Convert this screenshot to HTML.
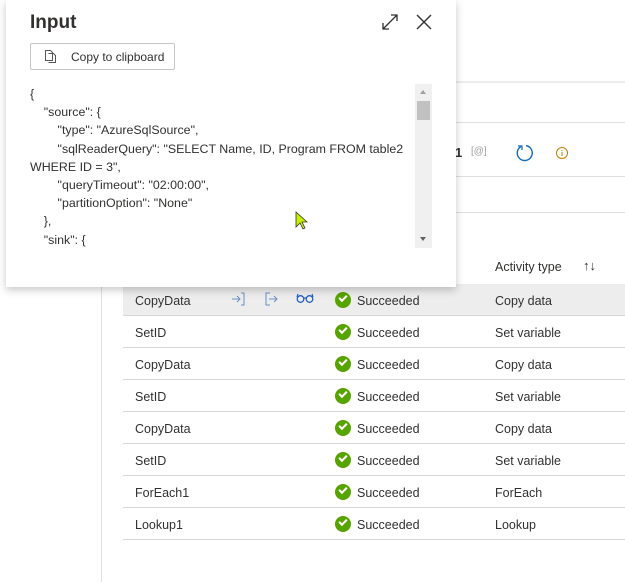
<!DOCTYPE html>
<html><head><style>
body{margin:0;width:625px;height:582px;position:relative;overflow:hidden;background:#fff;font-family:"Liberation Sans",sans-serif;color:#323130;font-size:12.5px}
.abs{position:absolute}
.hl{position:absolute;height:1px;background:#e1dfdd}
.row{position:absolute;left:123px;width:502px;height:32px;border-bottom:1px solid #d6d6d6;box-sizing:border-box}
.row span{position:absolute;top:10px}
.chk{position:absolute;left:212px;top:8px;width:16px;height:16px;border-radius:50%;background:#57a300}
.chk:after{content:"";position:absolute;left:4px;top:3px;width:6px;height:3px;border-left:2px solid #fff;border-bottom:2px solid #fff;transform:rotate(-45deg)}
.pop{position:absolute;left:6px;top:0;width:450px;height:287px;background:#fff;box-shadow:0 3px 8px rgba(0,0,0,.22)}
.code{position:absolute;left:24px;top:85px;line-height:18.2px;font-size:12.4px;white-space:pre;color:#323130}
</style></head><body>
<div class="hl" style="left:440px;top:81px;width:185px;height:2px;background:#ededed"></div>
<div class="hl" style="left:440px;top:122px;width:185px"></div>
<div class="hl" style="left:440px;top:176px;width:185px"></div>
<div class="hl" style="left:440px;top:212px;width:185px"></div>
<div class="abs" style="left:455px;top:145px;font-weight:bold;font-size:13px">1</div>
<div class="abs" style="left:471px;top:146px;font-size:10px;color:#a0a0a0">[@]</div>
<svg class="abs" style="left:515px;top:143px" width="20" height="20" viewBox="0 0 20 20"><path d="M6 3.5A7.5 7.5 0 1 0 11 2.6" fill="none" stroke="#0f6cbd" stroke-width="1.4"/><path d="M3 3h4v4" fill="none" stroke="#0f6cbd" stroke-width="1.2"/></svg>
<svg class="abs" style="left:555px;top:146px" width="14" height="14"><circle cx="7" cy="7" r="5.5" fill="none" stroke="#c07d00" stroke-width="1"/><path d="M7 6v4M7 4v1" stroke="#c07d00"/></svg>
<div class="abs" style="left:101px;top:287px;width:1px;height:295px;background:#e1dfdd"></div>
<div class="abs" style="left:495px;top:260px;font-size:12.5px">Activity type</div>
<div class="abs" style="left:583px;top:258px;font-size:13px">↑↓</div>
<div class="row" style="top:284px;background:#ededed"><span style="left:12px">CopyData</span>
<svg class="abs" style="left:108px;top:8px" width="15" height="14"><path d="M1 7h8M6 4l3 3-3 3M10 1h3v12h-3" fill="none" stroke="#6a8fc4" stroke-width="1"/></svg>
<svg class="abs" style="left:141px;top:8px" width="15" height="14"><path d="M6 1H2v12h4M5 7h8M10 4l3 3-3 3" fill="none" stroke="#6a8fc4" stroke-width="1"/></svg>
<svg class="abs" style="left:173px;top:9px" width="18" height="10"><circle cx="4.5" cy="6" r="3.3" fill="none" stroke="#1f5fc4" stroke-width="1.3"/><circle cx="13.5" cy="6" r="3.3" fill="none" stroke="#1f5fc4" stroke-width="1.3"/><path d="M8 5h2M1 4l1-3M17 4l-1-3" stroke="#1f5fc4" stroke-width="1.2"/></svg>
<div class="chk"></div><span style="left:234px">Succeeded</span><span style="left:372px">Copy data</span></div>
<div class="row" style="top:316px"><span style="left:12px">SetID</span><div class="chk"></div><span style="left:234px">Succeeded</span><span style="left:372px">Set variable</span></div>
<div class="row" style="top:348px"><span style="left:12px">CopyData</span><div class="chk"></div><span style="left:234px">Succeeded</span><span style="left:372px">Copy data</span></div>
<div class="row" style="top:380px"><span style="left:12px">SetID</span><div class="chk"></div><span style="left:234px">Succeeded</span><span style="left:372px">Set variable</span></div>
<div class="row" style="top:412px"><span style="left:12px">CopyData</span><div class="chk"></div><span style="left:234px">Succeeded</span><span style="left:372px">Copy data</span></div>
<div class="row" style="top:444px"><span style="left:12px">SetID</span><div class="chk"></div><span style="left:234px">Succeeded</span><span style="left:372px">Set variable</span></div>
<div class="row" style="top:476px"><span style="left:12px">ForEach1</span><div class="chk"></div><span style="left:234px">Succeeded</span><span style="left:372px">ForEach</span></div>
<div class="row" style="top:508px"><span style="left:12px">Lookup1</span><div class="chk"></div><span style="left:234px">Succeeded</span><span style="left:372px">Lookup</span></div>

<div class="pop">
<div class="abs" style="left:24px;top:12px;font-size:19px;font-weight:bold;color:#323130">Input</div>
<svg class="abs" style="left:375px;top:13px" width="18" height="18"><path d="M2 16L16 2M10 2h6v6M2 10v6h6" fill="none" stroke="#323130" stroke-width="1.3"/></svg>
<svg class="abs" style="left:409px;top:13px" width="18" height="18"><path d="M2 2l14 14M16 2L2 16" stroke="#323130" stroke-width="1.4"/></svg>
<div class="abs" style="left:24px;top:43px;width:145px;height:27px;border:1px solid #c8c6c4;border-radius:2px;box-sizing:border-box"></div>
<svg class="abs" style="left:38px;top:49px" width="14" height="14"><path d="M1.5 1.5h5l2 2v8h-7z M4.5 4.5h5l2 2v7h-7" fill="none" stroke="#555" stroke-width="1"/></svg>
<div class="abs" style="left:65px;top:50px;font-size:12px">Copy to clipboard</div>
<div class="code">{
    "source": {
        "type": "AzureSqlSource",
        "sqlReaderQuery": "SELECT Name, ID, Program FROM table2
WHERE ID = 3",
        "queryTimeout": "02:00:00",
        "partitionOption": "None"
    },
    "sink": {</div>
<div class="abs" style="left:409px;top:84px;width:17px;height:164px;background:#f0f0f0"></div>
<div class="abs" style="left:411px;top:101px;width:13px;height:19px;background:#c1c1c1"></div>
<div class="abs" style="left:414px;top:90px;border:3.5px solid transparent;border-bottom:4px solid #a0a0a0;border-top:0"></div>
<div class="abs" style="left:414px;top:237px;border:3.5px solid transparent;border-top:4px solid #606060;border-bottom:0"></div>
<svg class="abs" style="left:289px;top:211px" width="14" height="20"><path d="M1 1v15l4-4 3 6 2-1-3-6h5z" fill="#c6f000" stroke="#333" stroke-width="0.8"/></svg>
</div>
</body></html>
